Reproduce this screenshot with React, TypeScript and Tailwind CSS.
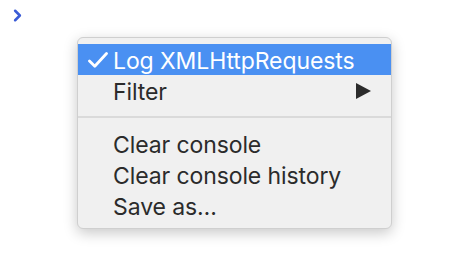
import { ChevronRight } from 'lucide-react';

const font = { fontFamily: 'Inter, "Liberation Sans", sans-serif' };

function Item({ label, active, submenu }: { label: string; active?: boolean; submenu?: boolean }) {
  return (
    <div
      className={`flex items-center h-[31px] pt-[3px] pl-[10px] pr-[20px] text-[23px] leading-none tracking-[-0.1px] ${
        active ? 'bg-[#4a90f2] text-white' : 'text-[#2b2b2b]'
      }`}
    >
      <span className="w-[25px] flex items-center -mt-[3px]">
        {active && (
          <svg width="20" height="16" viewBox="0 0 20 16" fill="none">
            <path d="M1.5 9 L6.8 14.3 L18.5 1.5" stroke="white" strokeWidth="2.8" strokeLinecap="round" strokeLinejoin="round" />
          </svg>
        )}
      </span>
      <span className="flex-1">{label}</span>
      {submenu && (
        <svg width="15" height="16" viewBox="0 0 15 16" className="-mt-[3px]">
          <path d="M0 0 L15 8 L0 16 Z" fill="#2b2b2b" />
        </svg>
      )}
    </div>
  );
}

export default function App() {
  return (
    <div className="w-[474px] h-[274px] bg-white relative" style={font}>
      <div className="pl-[8px] pt-[6px]">
        <ChevronRight className="w-[19px] h-[19px] text-[#3a5bd6]" strokeWidth={3.2} />
      </div>
      <div className="absolute left-[77px] top-[37px] w-[315px] rounded-[6px] bg-[#f0f0f0] border border-[#cfcfcf] shadow-[0_4px_14px_rgba(0,0,0,0.22)] pt-[6px] pb-[7px]">
        <Item label="Log XMLHttpRequests" active />
        <Item label="Filter" submenu />
        <div className="h-[22px] flex items-center">
          <div className="w-full h-[2px] bg-[#dadada]" />
        </div>
        <Item label="Clear console" />
        <Item label="Clear console history" />
        <Item label="Save as…" />
      </div>
    </div>
  );
}
